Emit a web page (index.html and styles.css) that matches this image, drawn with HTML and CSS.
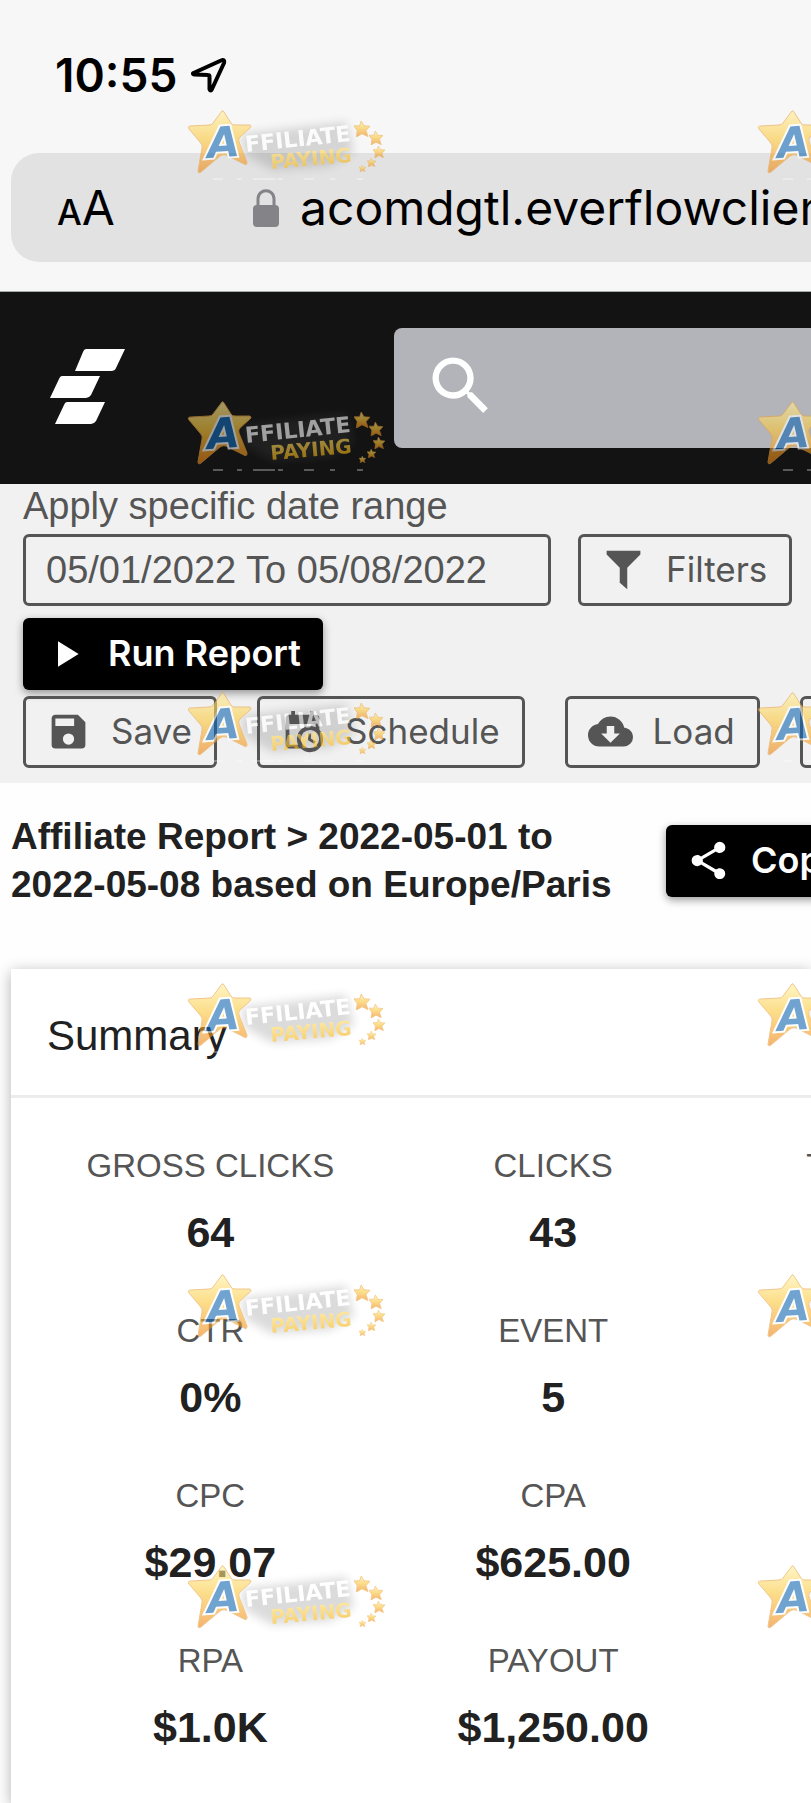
FILE: index.html
```html
<!DOCTYPE html>
<html lang="en">

<head>
  <meta charset="UTF-8">
  <meta name="viewport" content="width=device-width, initial-scale=1.0">
  <title>Affiliate Report</title>
  <link rel="stylesheet" href="styles.css">
</head>

<body>
  <svg class="defs" width="0" height="0" aria-hidden="true">
    <defs>
      <linearGradient id="gold" x1="0" y1="0" x2="0" y2="1">
        <stop offset="0" stop-color="#fff0a0" />
        <stop offset="0.45" stop-color="#fbc83c" />
        <stop offset="1" stop-color="#ee8212" />
      </linearGradient>
      <linearGradient id="yellow" x1="0" y1="0" x2="0" y2="1">
        <stop offset="0" stop-color="#ffe070" />
        <stop offset="1" stop-color="#f0a800" />
      </linearGradient>
      <filter id="soft" x="-20%" y="-50%" width="140%" height="200%">
        <feGaussianBlur stdDeviation="5" />
      </filter>
      <symbol id="small-star" viewBox="0 0 20 20">
        <path d="M9 0L12.500 6L20 6.500L15 12L17.500 19.500L10 16L3 20L4 12L0 6L7 6Z" fill="url(#gold)" stroke="#e89a30" stroke-width="1" />
      </symbol>
      <symbol id="mark" viewBox="0 0 210 80">
        <path d="M62 28L166 16L174 46L150 60L92 64L64 48Z" fill="#555" opacity="0.350" filter="url(#soft)" />
        <path d="M42 5Q43 4 44 6L51 17Q52 19 55 19L70 19Q72 20 70 22L60 31Q58 33 59 36L67 56Q67 60 64 58L46 49Q43 48 40 50L21 66Q18 68 18 65L22 42Q23 39 20 36L9 23Q7 20 11 20L29 19Q32 19 33 17Z" fill="url(#gold)" stroke="#e8a040" stroke-width="1" />
        <text class="mark-a" x="28" y="52" transform="rotate(-4 28 52)">A</text>
        <text class="mark-top" x="66" y="46" transform="rotate(-6 66 46)">FFILIATE</text>
        <text class="mark-bottom" x="91" y="63" transform="rotate(-5 91 63)">PAYING</text>
        <use href="#small-star" x="174" y="15" width="16" height="16" />
        <use href="#small-star" x="189" y="25" width="14" height="14" />
        <use href="#small-star" x="193" y="40" width="12" height="12" />
        <use href="#small-star" x="187" y="52" width="9" height="9" />
        <use href="#small-star" x="179" y="59" width="7" height="7" />
        <path d="M33 73H43M57 73H62M73 73H95M98 73H103M124 73H134M150 73H155M177 73H183" stroke="#fff" stroke-width="1" />
      </symbol>
    </defs>
  </svg>

  <div class="page">
    <div class="browser">
      <div class="status">
        <span>10:55</span>
        <svg class="location" viewBox="0 0 36 36" aria-hidden="true">
          <path d="M2.500 16L30 3.500Q34 2 33 6L21 32Q19.500 35 18.500 32V19.500Q18.500 18 17 18L3.500 17.500Q1 17 2.500 16Z" />
        </svg>
      </div>
      <div class="address">
        <button class="text-size" type="button" aria-label="Text size"><span class="small-a">A</span>A</button>
        <svg class="lock" viewBox="0 0 26 38" aria-hidden="true">
          <rect x="0" y="16" width="26" height="22" rx="4" />
          <path d="M5 17V10C5 -1 21 -1 21 10V17" />
        </svg>
        <span class="url">acomdgtl.everflowclient.io</span>
      </div>
    </div>

    <header class="header">
      <a href="#" class="logo" aria-label="Home">
        <svg viewBox="0 0 75 75">
          <path d="M36 0H75L66 19Q65 22 61 22H25L33 3Q34 0 36 0Z" />
          <path d="M12 27H50L41 46Q39 49 36 49H0L9 30Q10 27 12 27Z" />
          <path d="M17 53H55L46 72Q44 75 41 75H5L14 56Q15 53 17 53Z" />
        </svg>
      </a>
      <label class="search">
        <svg viewBox="0 0 24 24" aria-hidden="true">
          <path d="M15.500 14h-.79l-.28-.27A6.471 6.471 0 0 0 16 9.500 6.500 6.500 0 1 0 9.500 16c1.610 0 3.090-.59 4.230-1.570l.27.28v.79l5 4.990L20.490 19l-4.990-5zm-6 0C7.010 14 5 11.990 5 9.500S7.010 5 9.500 5 14 7.010 14 9.500 11.990 14 9.500 14z" />
        </svg>
        <input type="search" aria-label="Search">
      </label>
    </header>

    <section class="toolbar">
      <label class="date-label" for="range">Apply specific date range</label>
      <div class="row row-dates">
        <input class="date" id="range" type="text" value="05/01/2022 To 05/08/2022">
        <button class="btn" type="button">
          <svg viewBox="0 0 24 24" aria-hidden="true">
            <path d="M3 2H21V4L14 11V22.500L10 19V11L3 4Z" />
          </svg>
          Filters
        </button>
      </div>
      <div class="row row-run">
        <button class="btn btn-dark" type="button">
          <svg viewBox="0 0 24 24" aria-hidden="true">
            <path d="M8 5.500V19L19 12.200Z" />
          </svg>
          Run Report
        </button>
      </div>
      <div class="row row-actions">
        <button class="btn" type="button">
          <svg viewBox="0 0 24 24" aria-hidden="true">
            <path d="M15 9H5V5H15M12 19A3 3 0 0 1 9 16A3 3 0 0 1 12 13A3 3 0 0 1 15 16A3 3 0 0 1 12 19M17 3H5C3.890 3 3 3.900 3 5V19A2 2 0 0 0 5 21H19A2 2 0 0 0 21 19V7L17 3Z" />
          </svg>
          Save
        </button>
        <button class="btn" type="button">
          <svg viewBox="0 0 24 24" aria-hidden="true">
            <path d="M15,13H16.500V15.820L18.940,17.230L18.190,18.530L15,16.690V13M19,8H5V19H9.670C9.240,18.090 9,17.070 9,16A7,7 0 0,1 16,9C17.070,9 18.090,9.240 19,9.670V8M5,21C3.890,21 3,20.100 3,19V5C3,3.890 3.890,3 5,3H6V1H8V3H16V1H18V3H19A2,2 0 0,1 21,5V11.100C22.240,12.360 23,14.090 23,16A7,7 0 0,1 16,23C14.090,23 12.360,22.240 11.100,21H5M16,11.150A4.850,4.850 0 0,0 11.150,16C11.150,18.680 13.320,20.850 16,20.850A4.850,4.850 0 0,0 20.850,16C20.850,13.320 18.680,11.150 16,11.150Z" />
          </svg>
          Schedule
        </button>
        <button class="btn" type="button">
          <svg viewBox="0 0 24 24" aria-hidden="true">
            <path d="M17,13L12,18L7,13H10V9H14V13M19.350,10.030C18.670,6.590 15.640,4 12,4C9.110,4 6.600,5.640 5.350,8.030C2.340,8.360 0,10.900 0,14A6,6 0 0,0 6,20H19A5,5 0 0,0 24,15C24,12.360 21.950,10.220 19.350,10.030Z" />
          </svg>
          Load
        </button>
        <button class="btn" type="button" aria-label="More">
          <svg viewBox="0 0 24 24" aria-hidden="true"></svg>
        </button>
      </div>
    </section>

    <section class="report">
      <h1>Affiliate Report &gt; 2022-05-01 to 2022-05-08 based on Europe/Paris</h1>
      <button class="btn btn-dark" type="button">
        <svg viewBox="0 0 24 24" aria-hidden="true">
          <path d="M18,16.080C17.240,16.080 16.560,16.380 16.040,16.850L8.910,12.700C8.960,12.470 9,12.240 9,12C9,11.760 8.960,11.530 8.910,11.300L15.960,7.190C16.500,7.690 17.210,8 18,8A3,3 0 0,0 21,5A3,3 0 0,0 18,2A3,3 0 0,0 15,5C15,5.240 15.040,5.470 15.090,5.700L8.040,9.810C7.500,9.310 6.790,9 6,9A3,3 0 0,0 3,12A3,3 0 0,0 6,15C6.790,15 7.500,14.690 8.040,14.190L15.160,18.340C15.110,18.550 15.080,18.770 15.080,19C15.080,20.610 16.390,21.910 18,21.910C19.610,21.910 20.920,20.610 20.920,19A2.920,2.920 0 0,0 18,16.080Z" />
        </svg>
        Copy
      </button>
    </section>

    <section class="card">
      <h2>Summary</h2>
      <dl class="stats">
        <div>
          <dt>GROSS CLICKS</dt>
          <dd>64</dd>
        </div>
        <div>
          <dt>CLICKS</dt>
          <dd>43</dd>
        </div>
        <div>
          <dt>TOTAL CVS</dt>
          <dd></dd>
        </div>
        <div>
          <dt>CTR</dt>
          <dd>0%</dd>
        </div>
        <div>
          <dt>EVENT</dt>
          <dd>5</dd>
        </div>
        <div></div>
        <div>
          <dt>CPC</dt>
          <dd>$29.07</dd>
        </div>
        <div>
          <dt>CPA</dt>
          <dd>$625.00</dd>
        </div>
        <div></div>
        <div>
          <dt>RPA</dt>
          <dd>$1.0K</dd>
        </div>
        <div>
          <dt>PAYOUT</dt>
          <dd>$1,250.00</dd>
        </div>
        <div></div>
      </dl>
    </section>

    <div class="watermark" aria-hidden="true">
      <svg><use href="#mark" /></svg>
      <svg><use href="#mark" /></svg>
      <svg><use href="#mark" /></svg>
      <svg><use href="#mark" /></svg>
      <svg><use href="#mark" /></svg>
      <svg><use href="#mark" /></svg>
      <svg><use href="#mark" /></svg>
      <svg><use href="#mark" /></svg>
      <svg><use href="#mark" /></svg>
      <svg><use href="#mark" /></svg>
      <svg><use href="#mark" /></svg>
      <svg><use href="#mark" /></svg>
    </div>
  </div>
</body>

</html>
```
FILE: styles.css
```css
* {
  box-sizing: border-box;
}

body {
  font-family: "Liberation Sans", Arial, sans-serif;
  margin: 0;
  background-color: #fefefe;
  color: #212121;
}

.defs {
  position: absolute;
}

.page {
  position: relative;
  display: flex;
  flex-direction: column;
  min-height: 100vh;
  overflow: hidden;
}

/* phone status bar and address bar */
.browser {
  padding: 48px 0 29px 11px;
  background-color: #f7f7f7;
  border-bottom: 1px solid #a5aaaa;
  font-family: Inter, sans-serif;
  color: #000;
}

.status {
  display: flex;
  align-items: center;
  gap: 14px;
  height: 54px;
  margin-bottom: 51px;
  padding-left: 44px;
  font-size: 46px;
  font-weight: 600;
}

.location {
  width: 36px;
  height: 36px;
  fill: none;
  stroke: #000;
  stroke-width: 4;
  stroke-linejoin: round;
}

.address {
  display: flex;
  align-items: center;
  height: 109px;
  padding-left: 46px;
  border-radius: 28px 0 0 28px;
  background-color: #e2e2e2;
  white-space: nowrap;
}

.text-size {
  flex: none;
  width: 196px;
  padding: 0;
  border: 0;
  background: none;
  font-family: inherit;
  font-size: 48px;
  text-align: left;
  color: #000;
}

.small-a {
  font-size: 35px;
  font-weight: 500;
}

.lock {
  flex: none;
  width: 26px;
  height: 38px;
  margin-right: 21px;
  fill: #838388;
}

.lock path {
  fill: none;
  stroke: #838388;
  stroke-width: 3;
}

.url {
  font-size: 48px;
}

/* header */
.header {
  display: flex;
  align-items: center;
  height: 192px;
  padding-left: 50px;
  background-color: #131313;
}

.logo {
  flex: none;
  width: 344px;
  padding-bottom: 4px;
}

.logo svg {
  display: block;
  width: 75px;
  height: 75px;
  fill: #fff;
}

.search {
  display: flex;
  flex: 1;
  align-items: center;
  height: 120px;
  padding: 0 0 4px 29px;
  border-radius: 8px 0 0 8px;
  background-color: #b3b4b9;
}

.search svg {
  flex: none;
  width: 76px;
  height: 76px;
  fill: #fff;
}

.search input {
  flex: 1;
  min-width: 0;
  height: 100%;
  border: 0;
  outline: 0;
  background: none;
  font-size: 36px;
}

/* toolbar */
.toolbar {
  padding: 0 0 15px 23px;
  background-color: #f1f1f1;
  color: #555;
}

.date-label {
  display: block;
  padding-bottom: 6px;
  font-size: 38px;
  line-height: 44px;
}

.row {
  display: flex;
}

.row-dates {
  gap: 27px;
}

.row-run {
  margin: 12px 0 6px;
}

.row-actions {
  gap: 40px;
}

.date {
  width: 528px;
  height: 72px;
  padding: 0 20px;
  border: 3px solid #555;
  border-radius: 6px;
  background: none;
  font-family: inherit;
  font-size: 38px;
  color: #555;
}

.btn {
  display: flex;
  flex: none;
  align-items: center;
  gap: 20px;
  height: 72px;
  padding: 0 22px 2px 20px;
  border: 3px solid #555;
  border-radius: 6px;
  background: none;
  font-family: Inter, sans-serif;
  font-size: 35px;
  color: #555;
}

.btn svg {
  width: 45px;
  height: 45px;
  fill: #555;
}

.btn-dark {
  border: 0;
  background-color: #000;
  box-shadow: 0 3px 8px rgba(0, 0, 0, 0.4);
  font-size: 36px;
  font-weight: 600;
  color: #fff;
}

.btn-dark svg {
  fill: #fff;
}

/* report title */
.report {
  display: flex;
  align-items: center;
  gap: 25px;
  padding: 30px 0 60px 11px;
}

.report h1 {
  flex: none;
  width: 630px;
  margin: 0;
  font-size: 37px;
  line-height: 48px;
}

/* summary card */
.card {
  flex: 1;
  margin-left: 11px;
  background-color: #fff;
  box-shadow: 0 3px 14px rgba(0, 0, 0, 0.3);
}

.card h2 {
  margin: 0;
  padding: 42px 36px 34px;
  border-bottom: 3px solid #ececec;
  font-size: 42px;
  font-weight: normal;
  line-height: 50px;
}

.stats {
  display: grid;
  grid-template-columns: repeat(3, 44.4%);
  row-gap: 54px;
  margin: 0;
  padding: 48px 0 0 28px;
  text-align: center;
}

.stats dt {
  margin-bottom: 21px;
  font-size: 33px;
  line-height: 40px;
  color: #555;
}

.stats dd {
  margin: 0;
  font-size: 43px;
  font-weight: bold;
  line-height: 50px;
}

/* repeated mark over the page */
.watermark {
  position: absolute;
  inset: 0;
  display: grid;
  grid-template-columns: 570px 570px;
  grid-auto-rows: 291px;
  padding: 106px 0 0 180px;
  overflow: hidden;
  pointer-events: none;
  opacity: 0.6;
}

.watermark svg {
  width: 210px;
  height: 80px;
}

.mark-a {
  font: italic bold 42px "DejaVu Sans", sans-serif;
  fill: #1267b0;
  stroke: #fff;
  stroke-width: 4;
  paint-order: stroke;
}

.mark-top {
  font: bold 22px "DejaVu Sans", sans-serif;
  fill: #fff;
}

.mark-bottom {
  font: bold 20px "DejaVu Sans", sans-serif;
  fill: url(#yellow);
}
```
